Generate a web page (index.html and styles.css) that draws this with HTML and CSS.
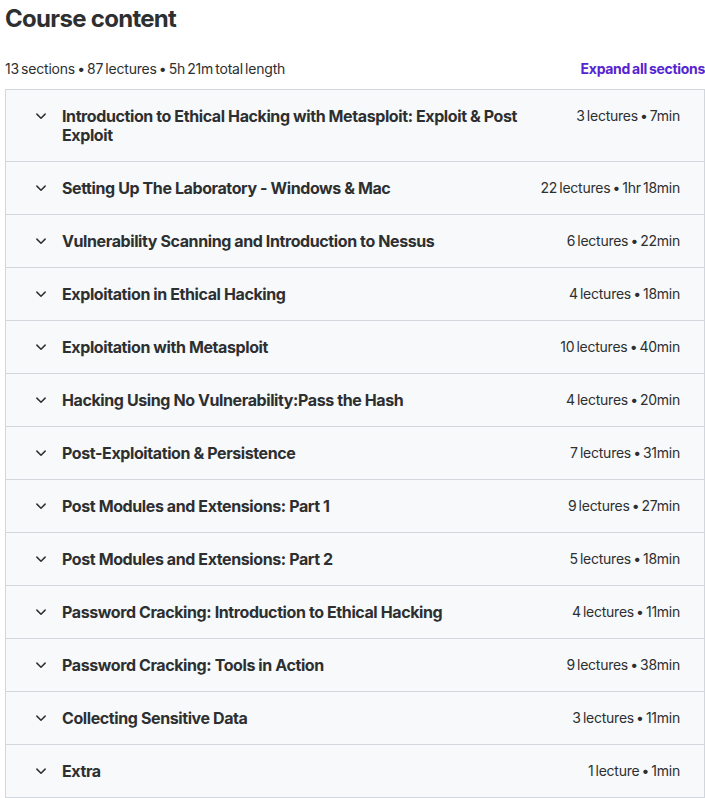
FILE: index.html
```html
<!DOCTYPE html>
<html lang="en">
<head>
    <meta charset="UTF-8">
    <meta name="viewport" content="width=device-width, initial-scale=1.0">
    <title>Course content</title>
    <link rel="stylesheet" href="styles.css">
</head>
<body>

    <div class="curriculum">
        <h2 class="curriculum-title">Course content</h2>

        <div class="curriculum-meta">
            <span>13 sections • 87 lectures • 5h 21m total length</span>
            <button class="expand-all" type="button">Expand all sections</button>
        </div>

        <div class="sections" id="sections"></div>
    </div>

    <script>
        const sections = [
            ['Introduction to Ethical Hacking with Metasploit: Exploit & Post Exploit', '3 lectures • 7min'],
            ['Setting Up The Laboratory - Windows & Mac', '22 lectures • 1hr 18min'],
            ['Vulnerability Scanning and Introduction to Nessus', '6 lectures • 22min'],
            ['Exploitation in Ethical Hacking', '4 lectures • 18min'],
            ['Exploitation with Metasploit', '10 lectures • 40min'],
            ['Hacking Using No Vulnerability:Pass the Hash', '4 lectures • 20min'],
            ['Post-Exploitation & Persistence', '7 lectures • 31min'],
            ['Post Modules and Extensions: Part 1', '9 lectures • 27min'],
            ['Post Modules and Extensions: Part 2', '5 lectures • 18min'],
            ['Password Cracking: Introduction to Ethical Hacking', '4 lectures • 11min'],
            ['Password Cracking: Tools in Action', '9 lectures • 38min'],
            ['Collecting Sensitive Data', '3 lectures • 11min'],
            ['Extra', '1 lecture • 1min']
        ];

        const chevron = `
            <svg class="chevron" viewBox="0 0 24 24" width="18" height="18" aria-hidden="true">
                <path d="M6.5 9.5l5.5 5.5 5.5-5.5" fill="none" stroke="currentColor" stroke-width="2" stroke-linecap="round" stroke-linejoin="round"/>
            </svg>`;

        const list = document.getElementById('sections');
        sections.forEach(([title, meta]) => {
            list.innerHTML += `
                <div class="section">
                    <span class="toggle">${chevron}</span>
                    <span class="section-title">${title}</span>
                    <span class="section-meta">${meta}</span>
                </div>
            `;
        });
    </script>
</body>
</html>
```

FILE: styles.css
```css
* {
    margin: 0;
    padding: 0;
    box-sizing: border-box;
}

body {
    font-family: Inter, "Noto Sans", sans-serif;
    color: #2d2f31;
    background: #fff;
}

.curriculum {
    width: 700px;
    margin-left: 5px;
}

.curriculum-title {
    font-size: 24px;
    font-weight: 700;
    line-height: 38px;
    letter-spacing: -0.7px;
}

.curriculum-meta {
    display: flex;
    justify-content: space-between;
    align-items: center;
    margin-top: 20px;
    margin-bottom: 9px;
    font-size: 14px;
    line-height: 22px;
    letter-spacing: -0.2px;
    word-spacing: -1.6px;
}

.expand-all {
    background: none;
    border: none;
    font: inherit;
    font-weight: 700;
    color: #5624d0;
    letter-spacing: -0.3px;
    word-spacing: -1px;
    cursor: pointer;
}

.sections {
    border: 1px solid #d1d7dc;
    border-bottom: none;
}

.section {
    display: flex;
    align-items: flex-start;
    background: #f7f9fa;
    border-bottom: 1px solid #d1d7dc;
    padding: 16px 24px 16px 26px;
    min-height: 53px;
}

.toggle {
    display: flex;
    align-items: center;
    justify-content: center;
    width: 18px;
    height: 20px;
    margin-right: 12px;
    flex-shrink: 0;
}

.section-title {
    flex: 1;
    font-size: 16px;
    font-weight: 700;
    line-height: 19px;
    letter-spacing: -0.4px;
    padding-top: 1px;
    padding-right: 32px;
}

.section-meta {
    font-size: 14px;
    line-height: 20px;
    letter-spacing: -0.25px;
    word-spacing: -1.5px;
    white-space: nowrap;
}
```
